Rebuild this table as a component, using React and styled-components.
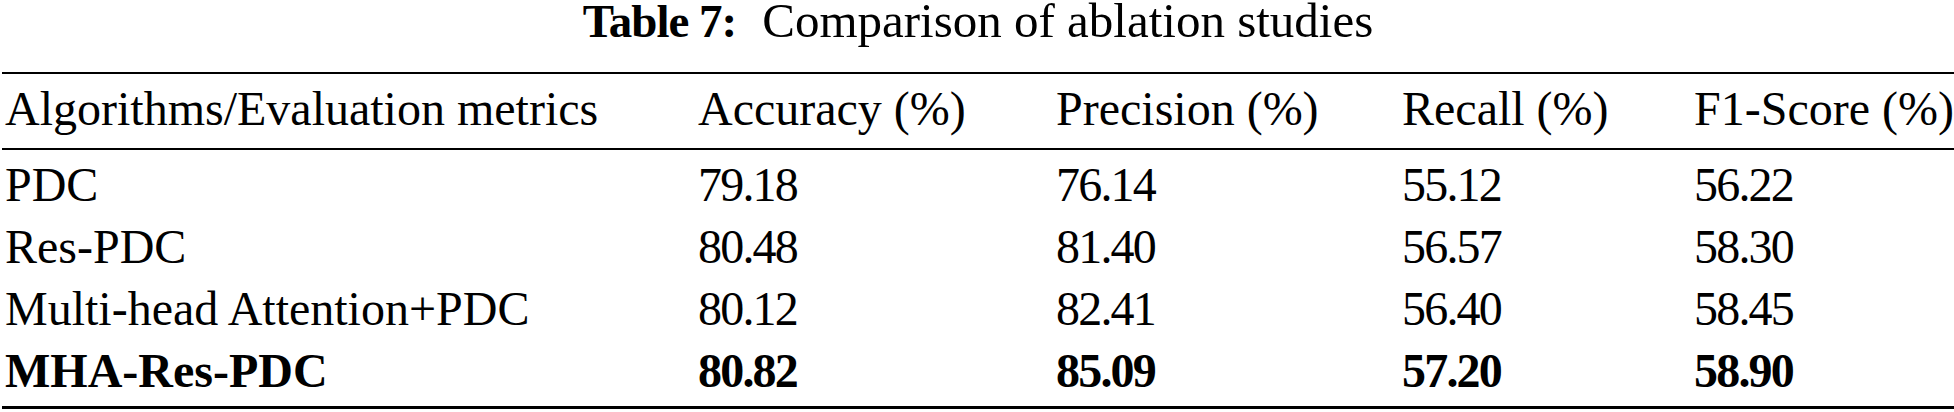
import React from "react";
import styled, { createGlobalStyle } from "styled-components";

const GlobalStyle = createGlobalStyle`
  body {
    margin: 0;
    background: #ffffff;
    color: #000000;
    font-family: "Liberation Serif", "Times New Roman", serif;
  }
`;

const Figure = styled.div`
  padding-left: 2px;
  width: 1952px;
`;

const Title = styled.div`
  text-align: center;
  font-size: 49px;
  line-height: 40px;
  padding-top: 1px;
  margin-bottom: 31px;

  b {
    font-size: 47px;
    font-weight: bold;
    letter-spacing: -1px;
    margin-right: 26px;
  }
`;

const Table = styled.table`
  width: 100%;
  border-collapse: collapse;
  table-layout: fixed;
  border-top: 2px solid #000;
  border-bottom: 3px solid #000;
  font-size: 48px;
  line-height: 62px;
`;

const Head = styled.thead`
  tr {
    border-bottom: 2px solid #000;
  }
  th {
    font-weight: normal;
    padding-top: 4px;
    padding-bottom: 8px;
  }
`;

const Body = styled.tbody`
  tr:first-child td {
    padding-top: 4px;
  }
  tr:last-child td {
    padding-bottom: 4px;
  }
`;

const Row = styled.tr`
  font-weight: ${(p) => (p.$best ? "bold" : "normal")};
`;

const Cell = styled.td`
  padding: 0 0 0 3px;
  text-align: left;
  white-space: nowrap;
  vertical-align: top;
  letter-spacing: ${(p) => (p.$num ? "-1.8px" : "0")};
`;

const HeadCell = styled.th`
  padding-left: 3px;
  padding-right: 0;
  text-align: left;
  white-space: nowrap;
  vertical-align: top;
`;

const columns = [
  { label: "Algorithms/Evaluation metrics", width: 693 },
  { label: "Accuracy (%)", width: 358 },
  { label: "Precision (%)", width: 346 },
  { label: "Recall (%)", width: 292 },
  { label: "F1-Score (%)", width: 263 },
];

const rows = [
  { name: "PDC", values: ["79.18", "76.14", "55.12", "56.22"] },
  { name: "Res-PDC", values: ["80.48", "81.40", "56.57", "58.30"] },
  { name: "Multi-head Attention+PDC", values: ["80.12", "82.41", "56.40", "58.45"] },
  { name: "MHA-Res-PDC", values: ["80.82", "85.09", "57.20", "58.90"], best: true },
];

function App() {
  return (
    <>
      <GlobalStyle />
      <Figure>
        <Title>
          <b>Table 7:</b>Comparison of ablation studies
        </Title>
        <Table>
          <colgroup>
            {columns.map((c) => (
              <col key={c.label} style={{ width: c.width }} />
            ))}
          </colgroup>
          <Head>
            <tr>
              {columns.map((c) => (
                <HeadCell key={c.label}>{c.label}</HeadCell>
              ))}
            </tr>
          </Head>
          <Body>
            {rows.map((r) => (
              <Row key={r.name} $best={r.best}>
                <Cell>{r.name}</Cell>
                {r.values.map((v, i) => (
                  <Cell key={i} $num>
                    {v}
                  </Cell>
                ))}
              </Row>
            ))}
          </Body>
        </Table>
      </Figure>
    </>
  );
}

export default App;
